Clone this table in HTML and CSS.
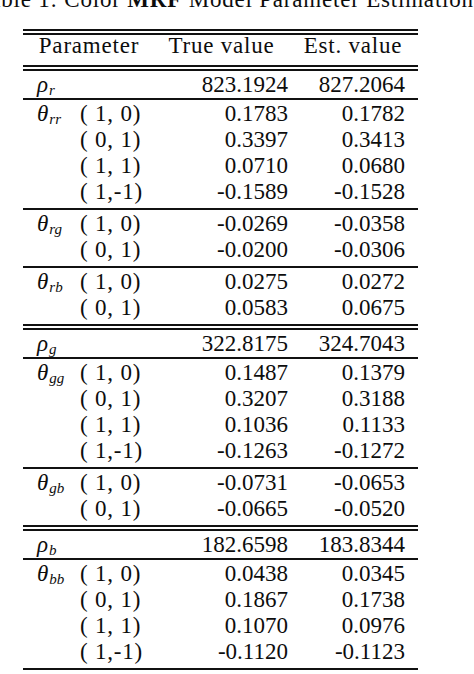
FILE: index.html
```
<!DOCTYPE html>
<html>
<head>
<meta charset="utf-8">
<link rel="stylesheet" href="styles.css">
</head>
<body>
<p class="caption"><span class="cap-cut">Ta</span>ble 1: Color <b>MRF</b> Model Parameter Estimation</p>
<div class="tbl">
  <div class="rule-dbl"></div>
  <div class="row head">
    <span class="h-param">Parameter</span>
    <span class="h-true">True value</span>
    <span class="h-est">Est. value</span>
  </div>
  <div class="rule-dbl"></div>

  <div class="row rho"><span class="sym">ρ<sub>r</sub></span><span></span><span class="num">823.1924</span><span class="num">827.2064</span></div>
  <div class="group">
    <div class="row"><span class="sym">θ<sub>rr</sub></span><span class="pair">( 1, 0)</span><span class="num">0.1783</span><span class="num">0.1782</span></div>
    <div class="row"><span class="sym"></span><span class="pair">( 0, 1)</span><span class="num">0.3397</span><span class="num">0.3413</span></div>
    <div class="row"><span class="sym"></span><span class="pair">( 1, 1)</span><span class="num">0.0710</span><span class="num">0.0680</span></div>
    <div class="row"><span class="sym"></span><span class="pair">( 1,-1)</span><span class="num">-0.1589</span><span class="num">-0.1528</span></div>
  </div>
  <div class="group">
    <div class="row"><span class="sym">θ<sub>rg</sub></span><span class="pair">( 1, 0)</span><span class="num">-0.0269</span><span class="num">-0.0358</span></div>
    <div class="row"><span class="sym"></span><span class="pair">( 0, 1)</span><span class="num">-0.0200</span><span class="num">-0.0306</span></div>
  </div>
  <div class="group">
    <div class="row"><span class="sym">θ<sub>rb</sub></span><span class="pair">( 1, 0)</span><span class="num">0.0275</span><span class="num">0.0272</span></div>
    <div class="row"><span class="sym"></span><span class="pair">( 0, 1)</span><span class="num">0.0583</span><span class="num">0.0675</span></div>
  </div>
  <div class="rule-dbl"></div>

  <div class="row rho"><span class="sym">ρ<sub>g</sub></span><span></span><span class="num">322.8175</span><span class="num">324.7043</span></div>
  <div class="group">
    <div class="row"><span class="sym">θ<sub>gg</sub></span><span class="pair">( 1, 0)</span><span class="num">0.1487</span><span class="num">0.1379</span></div>
    <div class="row"><span class="sym"></span><span class="pair">( 0, 1)</span><span class="num">0.3207</span><span class="num">0.3188</span></div>
    <div class="row"><span class="sym"></span><span class="pair">( 1, 1)</span><span class="num">0.1036</span><span class="num">0.1133</span></div>
    <div class="row"><span class="sym"></span><span class="pair">( 1,-1)</span><span class="num">-0.1263</span><span class="num">-0.1272</span></div>
  </div>
  <div class="group">
    <div class="row"><span class="sym">θ<sub>gb</sub></span><span class="pair">( 1, 0)</span><span class="num">-0.0731</span><span class="num">-0.0653</span></div>
    <div class="row"><span class="sym"></span><span class="pair">( 0, 1)</span><span class="num">-0.0665</span><span class="num">-0.0520</span></div>
  </div>
  <div class="rule-dbl"></div>

  <div class="row rho"><span class="sym">ρ<sub>b</sub></span><span></span><span class="num">182.6598</span><span class="num">183.8344</span></div>
  <div class="group last">
    <div class="row"><span class="sym">θ<sub>bb</sub></span><span class="pair">( 1, 0)</span><span class="num">0.0438</span><span class="num">0.0345</span></div>
    <div class="row"><span class="sym"></span><span class="pair">( 0, 1)</span><span class="num">0.1867</span><span class="num">0.1738</span></div>
    <div class="row"><span class="sym"></span><span class="pair">( 1, 1)</span><span class="num">0.1070</span><span class="num">0.0976</span></div>
    <div class="row"><span class="sym"></span><span class="pair">( 1,-1)</span><span class="num">-0.1120</span><span class="num">-0.1123</span></div>
  </div>
</div>
</body>
</html>
```
FILE: styles.css
```
html, body {
  margin: 0;
  padding: 0;
  background: #ffffff;
  overflow: hidden;
}

body {
  font-family: "Liberation Serif", "DejaVu Serif", serif;
  font-size: 23px;
  color: #0d0d0d;
}

.caption {
  margin: -13px 0 0 0;
  line-height: 26px;
  white-space: nowrap;
  text-indent: -23px;
  letter-spacing: 0.8px;
  font-family: "Liberation Serif", "DejaVu Serif", serif;
}

.caption b {
  font-weight: bold;
}

.tbl {
  width: 395px;
  margin: 16px 0 0 23px;
  font-family: "Liberation Serif", "DejaVu Serif", serif;
}

.rule-dbl {
  height: 2px;
  border-top: 2px solid #111111;
  border-bottom: 2px solid #111111;
}

.row {
  display: grid;
  grid-template-columns: 57px 75px 133px 117px 13px;
  line-height: 26px;
  white-space: nowrap;
  font-family: "Liberation Serif", "DejaVu Serif", serif;
}

.head {
  line-height: 22px;
  padding-bottom: 8px;
  letter-spacing: 0.8px;
}

.h-param {
  grid-column: 1 / 3;
  text-align: center;
}

.h-true {
  grid-column: 3 / 4;
  text-align: center;
}

.h-est {
  grid-column: 4 / 6;
  text-align: center;
}

.rho {
  padding-top: 1px;
}

.sym {
  padding-left: 14px;
  font-style: italic;
}

.sym sub {
  font-size: 15px;
  line-height: 0;
  vertical-align: -3px;
  margin-left: 1px;
}

.pair {
  letter-spacing: 0.8px;
}

.num {
  text-align: right;
}

.group {
  border-top: 2px solid #111111;
  padding: 1px 0 3px;
}

.group.last {
  border-bottom: 2px solid #111111;
}
```
